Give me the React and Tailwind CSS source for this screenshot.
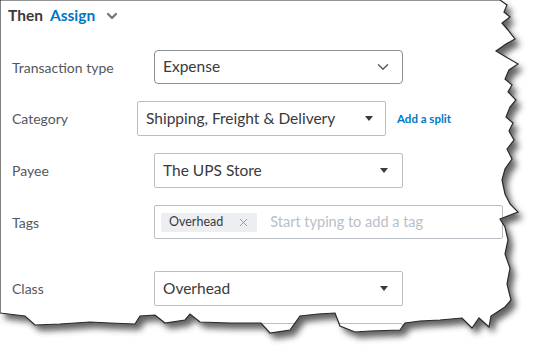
import { ChevronDown, X } from "lucide-react";

const PAGE =
  "M0,0 L500,0 L507,5 L504,12 L510,17 L502,23 L508,30 L515,39 L506,44 L496,51 L506,57 L518,64 L509,70 L505,79 L512,85 L508,92 L516,100 L510,107 L506,117 L513,123 L509,131 L514,140 L507,149 L512,159 L505,169 L502,180 L505,194 L510,204 L518,212 L500,219 L505,227 L508,240 L505,254 L510,268 L507,284 L511,300 L505,307 L491,316 L489,327 L479,318 L472,328 L462,318 L440,320 L420,321 L405,323 L400,330 L370,331 L355,332 L340,326 L335,313 L318,314 L300,316 L290,330 L270,333 L261,323 L230,323 L200,322 L190,314 L185,320 L165,323 L155,315 L140,316 L135,324 L110,323 L90,322 L60,324 L35,325 L25,316 L0,313 Z";

function TornEdge() {
  return (
    <svg
      className="absolute inset-0 pointer-events-none"
      width="540"
      height="357"
      viewBox="0 0 540 357"
    >
      <defs>
        <filter id="blur" x="-10%" y="-10%" width="120%" height="120%">
          <feGaussianBlur stdDeviation="3" />
        </filter>
        <clipPath id="outside">
          <path d={`M0,0 H540 V357 H0 Z ${PAGE}`} clipRule="evenodd" />
        </clipPath>
      </defs>
      <path d={`M0,0 H540 V357 H0 Z ${PAGE}`} fill="#fff" fillRule="evenodd" />
      <g clipPath="url(#outside)">
        <path d={PAGE} fill="#3a3a3a" opacity="0.8" filter="url(#blur)" transform="translate(5,6)" />
      </g>
      <path d={PAGE} fill="none" stroke="#2a2a2a" strokeWidth="1.2" />
    </svg>
  );
}

function Caret() {
  return (
    <svg width="8" height="5" viewBox="0 0 8 5">
      <path d="M0,0 L8,0 L4,5 Z" fill="#393a3d" />
    </svg>
  );
}

function Row({ label, labelWidth = "w-[142px]", mt, children }) {
  return (
    <div className={`flex items-center ${mt}`}>
      <div className={`${labelWidth} shrink-0 text-[14px] text-[#55575c]`}>{label}</div>
      {children}
    </div>
  );
}

export default function App() {
  return (
    <div
      className="relative w-[540px] h-[357px] overflow-hidden bg-white"
      style={{ fontFamily: "Lato, 'Open Sans', sans-serif" }}
    >
      <div className="pl-3">
        {/* Header */}
        <div className="flex items-center h-[32px] -ml-1 text-[15.5px] font-bold">
          <span className="text-[#393a3d]">Then</span>
          <span className="ml-[7px] text-[#0077c5]">Assign</span>
          <ChevronDown className="ml-[9px] w-[16px] h-[16px] text-[#76777c]" strokeWidth={3.5} />
        </div>

        <Row label="Transaction type" mt="mt-[18px]">
          <div className="flex items-center justify-between w-[249px] h-[34px] rounded-[4px] border border-[#8d9096] pl-[8px] pr-[10px] text-[15.5px] text-[#393a3d]">
            <span>Expense</span>
            <ChevronDown className="w-[18px] h-[18px] text-[#55575c]" strokeWidth={1.8} />
          </div>
        </Row>

        <Row label="Category" labelWidth="w-[125px]" mt="mt-[17px]">
          <div className="flex items-center w-[249px] h-[35px] rounded-[2px] border border-[#babec5] pl-[8px] pr-[12px] text-[15.5px] text-[#393a3d]">
            <span className="block w-[201px] shrink-0 overflow-hidden whitespace-nowrap">Shipping, Freight &amp; Delivery</span>
            <span className="ml-auto flex"><Caret /></span>
          </div>
          <span className="ml-[11px] text-[11.5px] font-bold text-[#0077c5]">Add a split</span>
        </Row>

        <Row label="Payee" mt="mt-[17px]">
          <div className="flex items-center justify-between w-[249px] h-[35px] rounded-[2px] border border-[#babec5] pl-[8px] pr-[14px] text-[15.5px] text-[#393a3d]">
            <span>The UPS Store</span>
            <Caret />
          </div>
        </Row>

        <Row label="Tags" mt="mt-[17px]">
          <div className="flex items-center w-[349px] h-[34px] rounded-[2px] border border-[#babec5] pl-[6px] text-[#393a3d]">
            <div className="flex items-center h-[19px] pl-[8px] pr-[7px] rounded-[2px] bg-[#eceef1] text-[12.5px]">
              <span>Overhead</span>
              <X className="ml-[14px] w-[13px] h-[13px] text-[#8d9096]" strokeWidth={1.6} />
            </div>
            <span className="ml-[13px] text-[14.5px] text-[#babec5]">Start typing to add a tag</span>
          </div>
        </Row>

        <Row label="Class" mt="mt-[32px]">
          <div className="flex items-center justify-between w-[249px] h-[35px] rounded-[2px] border border-[#babec5] pl-[8px] pr-[14px] text-[15.5px] text-[#393a3d]">
            <span>Overhead</span>
            <Caret />
          </div>
        </Row>

        <Row label="" mt="mt-[17px]">
          <div className="w-[249px] h-[35px] rounded-[2px] border border-[#babec5]" />
        </Row>
      </div>

      <TornEdge />
    </div>
  );
}
